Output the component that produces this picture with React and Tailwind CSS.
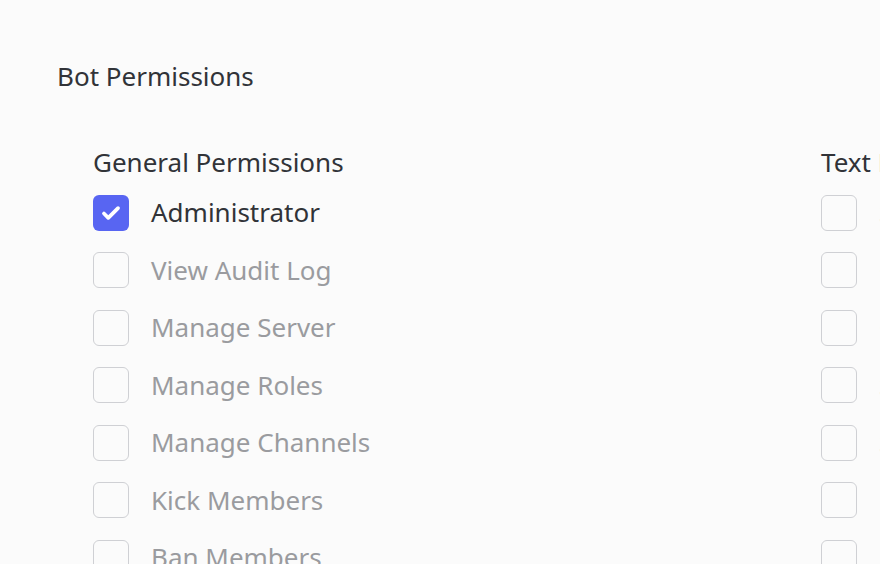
import React from 'react';

const GENERAL = [
  { label: 'Administrator', checked: true },
  { label: 'View Audit Log' },
  { label: 'Manage Server' },
  { label: 'Manage Roles' },
  { label: 'Manage Channels' },
  { label: 'Kick Members' },
  { label: 'Ban Members' },
];

const TEXT = [
  'Send Messages',
  'Create Public Threads',
  'Create Private Threads',
  'Send Messages in Threads',
  'Send TTS Messages',
  'Manage Messages',
  'Manage Threads',
];

function Box({ checked }) {
  if (checked) {
    return (
      <span className="w-9 h-9 shrink-0 rounded-[6px] bg-[#5865f2] flex items-center justify-center">
        <svg width="26" height="26" viewBox="0 0 24 24" fill="none">
          <path d="M5.5 12.5l4 4L18.5 7.5" stroke="#fff" strokeWidth="3.4" strokeLinecap="round" strokeLinejoin="round" />
        </svg>
      </span>
    );
  }
  return <span className="w-9 h-9 shrink-0 rounded-[6px] border border-[#cfd0d4] bg-[#fbfbfb]" />;
}

function Row({ label, checked, disabled }) {
  return (
    <div className="h-[57.5px] flex items-center gap-[22px] whitespace-nowrap">
      <Box checked={checked} />
      <span className={`text-[26px] ${disabled ? 'text-[#9a9b9f]' : 'text-[#313338]'}`}>{label}</span>
    </div>
  );
}

export default function App() {
  return (
    <div
      className="w-[880px] h-[564px] overflow-hidden bg-[#fbfbfb] pl-[57px] pt-[58px]"
      style={{ fontFamily: '"Noto Sans", "Open Sans", sans-serif' }}
    >
      <h2 className="text-[26px] leading-[36px] text-[#313338]">Bot Permissions</h2>
      <div className="mt-[52px] pl-[36px] grid grid-cols-[728px_1fr]">
        <div>
          <h3 className="text-[26px] leading-[32px] text-[#313338] mb-[6px]">General Permissions</h3>
          {GENERAL.map((p) => (
            <Row key={p.label} label={p.label} checked={p.checked} disabled={!p.checked} />
          ))}
        </div>
        <div>
          <h3 className="text-[26px] leading-[32px] text-[#313338] mb-[6px]">Text Permissions</h3>
          {TEXT.map((t) => (
            <Row key={t} label={t} disabled />
          ))}
        </div>
      </div>
    </div>
  );
}
